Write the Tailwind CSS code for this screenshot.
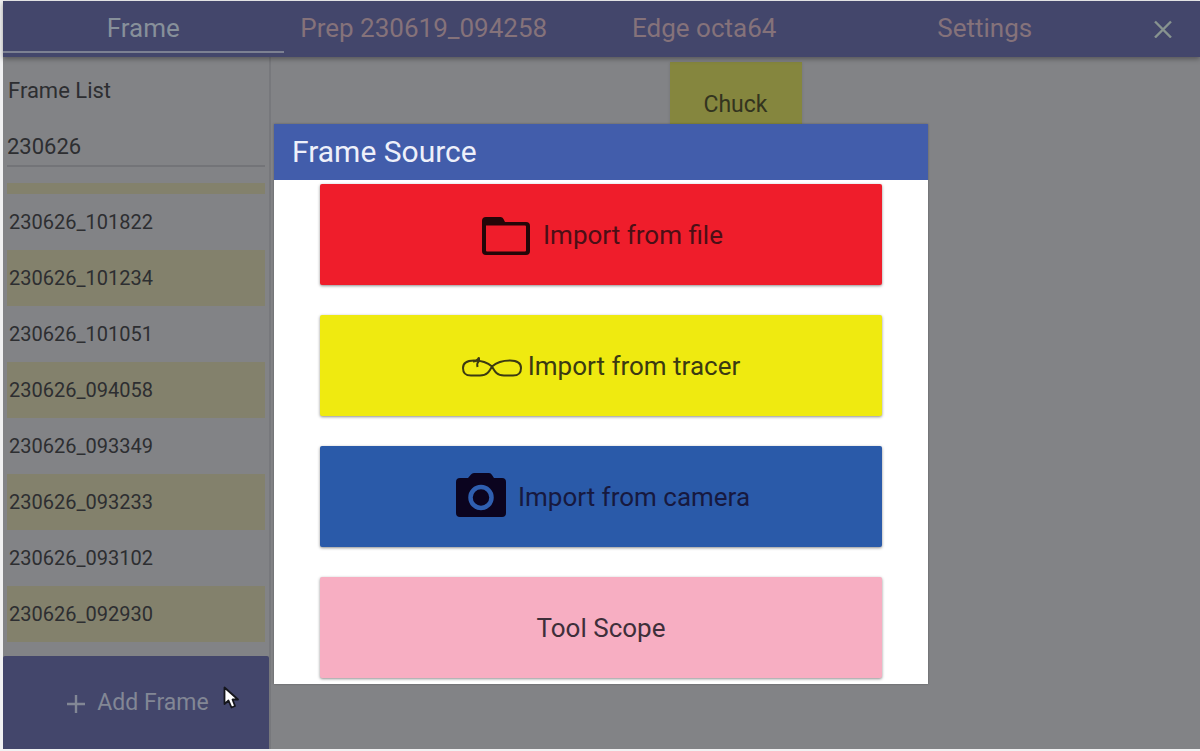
<!DOCTYPE html>
<html lang="en">
<head>
<meta charset="utf-8">
<title>Frame Source</title>
<script src="https://cdn.jsdelivr.net/npm/@tailwindcss/browser@4"></script>
</head>
<body class="bg-[#f1f1f2] font-['Roboto',sans-serif]">
<div class="relative flex h-screen flex-col overflow-hidden pt-px pb-0.5 pl-[3px]">
  <header class="relative z-10 flex h-14 shrink-0 bg-[#43466b] text-[26px] text-[#85727a] shadow-[0_2px_5px_rgba(0,0,0,0.35)]">
    <nav class="grid flex-1 grid-cols-4">
      <button class="relative pb-0.5 text-[#87909a]">Frame<span class="absolute inset-x-0 bottom-1 h-0.5 bg-[#7c8092]"></span></button>
      <button class="pb-0.5">Prep 230619_094258</button>
      <button class="pb-0.5">Edge octa64</button>
      <button class="pb-0.5">Settings</button>
    </nav>
    <button aria-label="Close" class="flex w-[75px] items-center justify-center text-[#87938f]">
      <svg class="h-[18px] w-[18px]" viewBox="0 0 18 18" fill="none" stroke="currentColor" stroke-width="2.4"><path d="M1 1.500 17 17.500M17 1.500 1 17.500"/></svg>
    </button>
  </header>

  <div class="flex min-h-0 flex-1 bg-[#828386] text-[#2d2e31]">
    <aside class="flex w-[268px] shrink-0 flex-col border-r-2 border-[#77787c]">
      <div class="flex flex-col px-1 pt-4">
        <label for="filter" class="px-px text-[22px] leading-9">Frame List</label>
        <input id="filter" value="230626" class="mt-3 h-[46px] w-full border-b-2 border-[#737478] bg-transparent pt-1.5 text-[22px] outline-none">
      </div>
      <ul class="mx-1 mt-4 mb-[14px] flex min-h-0 flex-1 flex-col justify-end overflow-hidden text-[20px]">
        <li class="flex h-14 shrink-0 items-center bg-[#83816c] px-0.5"></li>
        <li class="flex h-14 shrink-0 items-center px-0.5">230626_101822</li>
        <li class="flex h-14 shrink-0 items-center bg-[#83816c] px-0.5">230626_101234</li>
        <li class="flex h-14 shrink-0 items-center px-0.5">230626_101051</li>
        <li class="flex h-14 shrink-0 items-center bg-[#83816c] px-0.5">230626_094058</li>
        <li class="flex h-14 shrink-0 items-center px-0.5">230626_093349</li>
        <li class="flex h-14 shrink-0 items-center bg-[#83816c] px-0.5">230626_093233</li>
        <li class="flex h-14 shrink-0 items-center px-0.5">230626_093102</li>
        <li class="flex h-14 shrink-0 items-center bg-[#83816c] px-0.5">230626_092930</li>
      </ul>
      <button class="flex h-[93px] shrink-0 items-center justify-center gap-3 rounded-t-xs bg-[#43466b] pt-0.5 pl-1 text-[23px] text-[#828795]">
        <svg class="h-[18px] w-[18px]" viewBox="0 0 18 18" fill="none" stroke="currentColor" stroke-width="2.4"><path d="M9 0v18M0 9h18"/></svg>
        Add Frame
      </button>
    </aside>
    <main class="flex flex-1 items-start justify-center pt-[5px]">
      <button class="h-[84px] w-[132px] bg-[#85863e] pt-0.5 text-[23px] text-[#33341f] shadow-sm">Chuck</button>
    </main>
  </div>

  <div role="dialog" aria-labelledby="dialog-title" class="absolute top-[124px] left-[274px] z-20 w-[654px] bg-white shadow-[0_0_2px_rgba(0,0,0,0.3)]">
    <h2 id="dialog-title" class="flex h-14 items-center bg-[#425dab] px-[18px] pb-0.5 text-[30px] text-[#eef0fa]">Frame Source</h2>
    <div class="flex flex-col gap-[30px] px-[46px] pt-1 pb-1.5 text-[26px]">
      <button class="flex h-[101px] items-center justify-center gap-3 rounded-xs bg-[#ef1d2b] pt-0.5 pl-0.5 text-[#4b0f16] shadow-[0_1px_3px_rgba(0,0,0,0.45)]">
        <svg class="h-10 w-[50px]" viewBox="0 0 50 40"><path fill="#240608" fill-rule="evenodd" d="M5 1H19.500Q21.500 1 22.500 3L24 6H45Q49 6 49 10V35Q49 39 45 39H5Q1 39 1 35V5Q1 1 5 1ZM5 9.500V34.500Q5 35.500 6 35.500H44Q45 35.500 45 34.500V10.500Q45 9.500 44 9.500Z"/></svg>
        Import from file
      </button>
      <button class="flex h-[101px] items-center justify-center gap-1.5 rounded-xs bg-[#efea10] pt-0.5 text-[#3b3a12] shadow-[0_1px_3px_rgba(0,0,0,0.45)]">
        <svg class="h-5 w-[60px]" viewBox="0 0 60 20" fill="none" stroke="#3b3a12" stroke-width="2"><path d="M30 9.500C25 5 19 3.500 12 3.500 4 3.500 1 6 1 11 1 17 4 18.500 9 18.500H18C25 18.500 27 15 30 9.500ZM30 9.500C35 5 41 3.500 48 3.500 56 3.500 59 6 59 11 59 17 56 18.500 51 18.500H42C35 18.500 33 15 30 9.500Z"/><path d="M11 4.500Q15 4.500 17 .500V4Q14.500 6 15.500 10"/></svg>
        Import from tracer
      </button>
      <button class="flex h-[101px] items-center justify-center gap-3 rounded-xs bg-[#2a5aa9] pt-0.5 pl-1 text-[#17193f] shadow-[0_1px_3px_rgba(0,0,0,0.45)]">
        <svg class="-mt-1.5 h-[46px] w-[50px]" viewBox="0 0 50 46"><path fill="#0b041f" d="M18 1H33Q35 1 36 3L38 6H46Q50 6 50 10V41Q50 45 46 45H4Q0 45 0 41V10Q0 6 4 6H12L15 2.500Q16 1 18 1Z"/><circle cx="25" cy="25.500" r="10.500" fill="none" stroke="#2f5fb0" stroke-width="4.500"/></svg>
        Import from camera
      </button>
      <button class="h-[101px] rounded-xs bg-[#f7aec2] pt-0.5 text-[#3e2f3a] shadow-[0_1px_3px_rgba(0,0,0,0.45)]">Tool Scope</button>
    </div>
  </div>

  <svg class="absolute top-[686px] left-[223px] z-30 h-[24px] w-[17px]" viewBox="0 0 17 24"><path fill="#fff" stroke="#15161c" stroke-width="1.800" stroke-linejoin="round" d="M1.500 1.500V18L5.500 14.500 8.500 21.500 12 20 9.500 13.500H15Z"/></svg>
</div>
</body>
</html>
